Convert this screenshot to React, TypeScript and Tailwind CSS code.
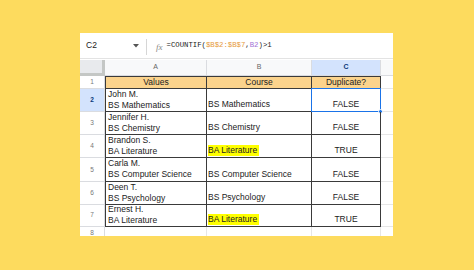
import * as React from "react"

const ROWS = [
  { n: "1", a: ["Values"], b: "Course", c: "Duplicate?", head: true, h: "h-[13px]" },
  { n: "2", a: ["John M.", "BS Mathematics"], b: "BS Mathematics", c: "FALSE", h: "h-[23px]", sel: true },
  { n: "3", a: ["Jennifer H.", "BS Chemistry"], b: "BS Chemistry", c: "FALSE", h: "h-[23px]" },
  { n: "4", a: ["Brandon S.", "BA Literature"], b: "BA Literature", c: "TRUE", h: "h-[23px]", hl: true },
  { n: "5", a: ["Carla M.", "BS Computer Science"], b: "BS Computer Science", c: "FALSE", h: "h-[24px]" },
  { n: "6", a: ["Deen T.", "BS Psychology"], b: "BS Psychology", c: "FALSE", h: "h-[22px]" },
  { n: "7", a: ["Ernest H.", "BA Literature"], b: "BA Literature", c: "TRUE", h: "h-[23px]", hl: true },
]

export default function App() {
  return (
    <div className="w-[474px] h-[270px] bg-[#fddb5e] pl-[80px] pt-[33px] overflow-hidden" style={{ fontFamily: '"Liberation Sans", Arial, sans-serif' }}>
      <div className="w-[313px] h-[203px] bg-white overflow-hidden">
        {/* Formula bar */}
        <div className="h-[26px] flex items-center border-b border-[#e3e3e3]">
          <div className="w-[53px] pl-[6px] text-[8.5px] text-[#222]">C2</div>
          <svg width="6" height="4" viewBox="0 0 6 4" className="mr-[7px]"><path d="M0 0h6L3 3.5z" fill="#555" /></svg>
          <div className="w-px h-[16px] bg-[#d6d6d6] mt-[3px]" />
          <div className="ml-[9px] mt-[4px] text-[9px] italic text-[#888]" style={{ fontFamily: '"Liberation Serif", serif' }}>fx</div>
          <div className="ml-[4px] text-[7.3px] text-[#222]" style={{ fontFamily: '"Liberation Mono", monospace' }}>
            =COUNTIF(<span className="text-[#e69a3c]">$B$2:$B$7</span>,<span className="text-[#9f72d6]">B2</span>)&gt;1
          </div>
        </div>

        {/* Column header */}
        <div className="grid grid-cols-[25px_102px_105px_69px_12px] h-[16px] mt-[1px] text-[7px] text-[#666]">
          <div className="bg-[#e8eaed] border-r-[3px] border-b-[3px] border-[#c4c7c5]" />
          <div className="bg-[#f8f9fa] border-r border-b border-[#dadce0] flex items-center justify-center">A</div>
          <div className="bg-[#f8f9fa] border-r border-b border-[#dadce0] flex items-center justify-center">B</div>
          <div className="bg-[#d3e3fd] border-r border-b border-[#dadce0] flex items-center justify-center font-bold text-[#0b3a7a]">C</div>
          <div className="bg-[#f8f9fa] border-b border-[#dadce0]" />
        </div>

        {ROWS.map((r) => (
          <div key={r.n} className={`grid grid-cols-[25px_102px_105px_69px_12px] ${r.h} text-[8.5px] text-[#222]`}>
            <div className={`border-r border-b border-[#dadce0] flex items-center justify-center text-[6.5px] ${r.sel ? "bg-[#d3e3fd] text-[#0b3a7a] font-bold" : "text-[#777]"}`}>{r.n}</div>
            {r.head ? (
              <>
                <div className="bg-[#fbd38c] border-x border-y border-[#3a3a3a] flex items-center justify-center leading-none">{r.a[0]}</div>
                <div className="bg-[#fbd38c] border-r border-y border-[#3a3a3a] flex items-center justify-center leading-none">{r.b}</div>
                <div className="bg-[#fbd38c] border-r border-y border-[#3a3a3a] flex items-center justify-center leading-none">{r.c}</div>
              </>
            ) : (
              <>
                <div className="border-x border-b border-[#3a3a3a] pl-[2px] leading-[11px] pt-[0px]">
                  <div>{r.a[0]}</div>
                  <div>{r.a[1]}</div>
                </div>
                <div className="border-r border-b border-[#3a3a3a] pl-[1px] flex items-end pb-[1px] leading-[11px]">
                  <span className={r.hl ? "bg-[#ffff00] pr-[2px]" : ""}>{r.b}</span>
                </div>
                <div className="relative border-r border-b border-[#3a3a3a] flex items-end justify-center pb-[1px] leading-[11px]">
                  {r.c}
                  {r.sel && (
                    <>
                      <div className="absolute -inset-[1px] border-[1.5px] border-[#1a73e8]" />
                      <div className="absolute -right-[3px] -bottom-[3px] w-[5px] h-[5px] bg-[#1a73e8] rounded-full border border-white" />
                    </>
                  )}
                </div>
              </>
            )}
            <div className="border-b border-[#e6e6e6]" />
          </div>
        ))}

        <div className="grid grid-cols-[25px_102px_105px_69px_12px] h-[12px]">
          <div className="border-r border-[#dadce0] text-[6.5px] text-[#777] flex justify-center pt-[1px]">8</div>
          <div className="border-r border-[#e6e6e6]" />
          <div className="border-r border-[#e6e6e6]" />
          <div className="border-r border-[#e6e6e6]" />
          <div />
        </div>
      </div>
    </div>
  )
}
